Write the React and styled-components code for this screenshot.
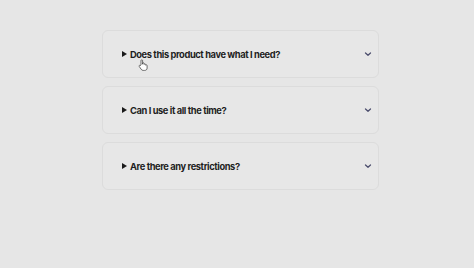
import React from "react";
import styled, { createGlobalStyle } from "styled-components";

const GlobalStyle = createGlobalStyle`
  html, body {
    margin: 0;
    padding: 0;
    background: #e6e6e6;
  }
  body {
    font-family: Inter, "Noto Sans", sans-serif;
    color: #1e1e1e;
  }
`;

const List = styled.div`
  display: flex;
  flex-direction: column;
  gap: 8px;
  width: 277px;
  margin: 30px 0 0 102px;
`;

const Item = styled.details`
  border: 1px solid #dcdcdc;
  border-radius: 6px;
  background: #e7e7e7;
`;

const Summary = styled.summary`
  position: relative;
  display: flex;
  align-items: center;
  height: 46px;
  padding: 0 6px 0 19px;
  list-style: none;
  cursor: pointer;

  &::-webkit-details-marker {
    display: none;
  }
`;

const Marker = styled.span`
  width: 0;
  height: 0;
  border-top: 3px solid transparent;
  border-bottom: 3px solid transparent;
  border-left: 5px solid #1a1a1a;
  margin-right: 3px;
`;

const Question = styled.span`
  flex: 1;
  font-size: 9.3px;
  font-weight: 650;
  letter-spacing: -0.4px;
`;

const Chevron = styled.svg`
  width: 8px;
  height: 8px;
  color: #4d4f6e;
`;

const Pointer = styled.svg`
  position: absolute;
  left: 35px;
  top: 28px;
  width: 10px;
  height: 12px;
`;

const questions = [
  "Does this product have what I need?",
  "Can I use it all the time?",
  "Are there any restrictions?",
];

const App = () => {
  return (
    <>
      <GlobalStyle />
      <List>
        {questions.map((q, i) => (
          <Item key={q}>
            <Summary>
              <Marker />
              <Question>{q}</Question>
              <Chevron viewBox="0 0 8 8" fill="none">
                <path d="M1.5 3l2.5 2.3L6.5 3" stroke="currentColor" strokeWidth="1.3" strokeLinecap="round" strokeLinejoin="round" />
              </Chevron>
              {i === 0 && (
                <Pointer viewBox="0 0 10 12" fill="none">
                  <path
                    d="M3 6V1.6a.8.8 0 011.6 0V5.2V4.6a.8.8 0 011.6 0v.8a.8.8 0 011.5.2v.6a.8.8 0 011.4.3v2.6C9.1 10.6 8 11.4 6.6 11.4H5.2c-.9 0-1.5-.4-2-1.1L1.2 7.4a.8.8 0 011.2-1L3 7"
                    fill="#fff"
                    stroke="#333"
                    strokeWidth="0.7"
                    strokeLinejoin="round"
                  />
                </Pointer>
              )}
            </Summary>
          </Item>
        ))}
      </List>
    </>
  );
};

export default App;
